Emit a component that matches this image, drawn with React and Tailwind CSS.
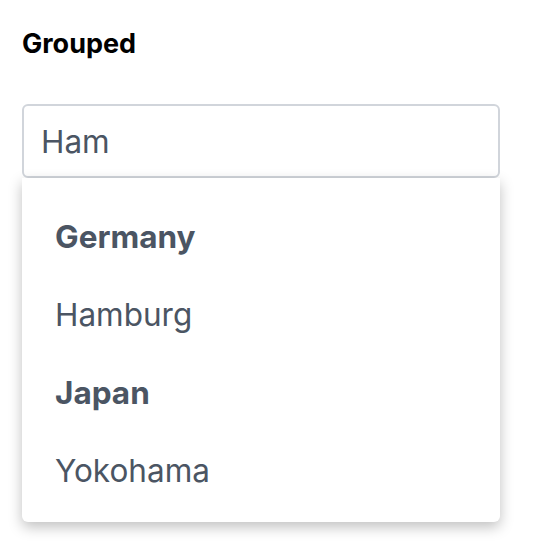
import React, { useState } from 'react';

const groups = [
  { label: 'Germany', options: ['Hamburg'] },
  { label: 'Japan', options: ['Yokohama'] },
];

export default function App() {
  const [query, setQuery] = useState('Ham');

  return (
    <div className="min-h-screen bg-white px-[22px] pt-[24px] font-['Inter',_'Liberation_Sans',_sans-serif]">
      <div className="w-[478px]">
        <div className="text-[27px] font-bold leading-[40px] text-black">Grouped</div>

        <div className="relative mt-[40px]">
          <input
            value={query}
            onChange={(e) => setQuery(e.target.value)}
            className="block h-[74px] w-full rounded-[6px] border-2 border-[#d1d5db] bg-white px-[17px] text-[31.5px] text-[#4b5563] outline-none"
          />

          {/* Dropdown listbox */}
          <div className="absolute left-0 right-0 top-[74px] rounded-b-[6px] bg-white pt-[20px] pb-[12px] shadow-[0_5px_14px_rgba(0,0,0,0.25)]">
            {groups.map((group) => (
              <div key={group.label}>
                <div className="flex h-[78px] items-center px-[33px] text-[31.5px] font-bold text-[#4b5563]">
                  {group.label}
                </div>
                {group.options.map((opt) => (
                  <div key={opt} className="flex h-[78px] items-center px-[33px] text-[31.5px] text-[#4b5563]">
                    {opt}
                  </div>
                ))}
              </div>
            ))}
          </div>
        </div>
      </div>
    </div>
  );
}
